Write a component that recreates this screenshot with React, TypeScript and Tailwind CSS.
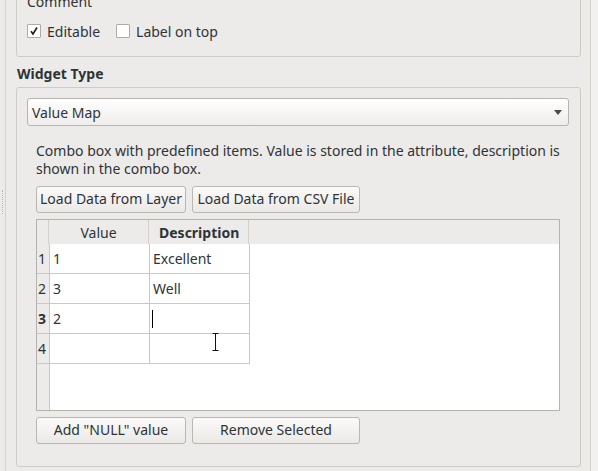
import React from "react";

const font = { fontFamily: '"Noto Sans", "Open Sans", sans-serif' };

function Checkbox({ checked, label }: { checked?: boolean; label: string }) {
  return (
    <label className="flex items-center gap-[6px]">
      <span className="w-[14px] h-[14px] border border-[#aeaaa6] bg-white rounded-[1px] flex items-center justify-center">
        {checked && (
          <svg width="10" height="10" viewBox="0 0 10 10">
            <path d="M2 5.2 L4 8 L8 1.5" fill="none" stroke="#1e1e1e" strokeWidth="1.6" />
          </svg>
        )}
      </span>
      <span>{label}</span>
    </label>
  );
}

function Button({ children, w }: { children: React.ReactNode; w: string }) {
  return (
    <button
      className={`${w} h-[27px] border border-[#bab6b2] rounded-[3px] bg-gradient-to-b from-[#fbfaf9] to-[#ebe9e6] text-[#2e3436] flex items-center justify-center leading-[18px] pb-[1px]`}
    >
      {children}
    </button>
  );
}

const rows = [
  { n: "1", value: "1", desc: "Excellent" },
  { n: "2", value: "3", desc: "Well" },
  { n: "3", value: "2", desc: "", current: true },
  { n: "4", value: "", desc: "" },
];

function ValueTable() {
  return (
    <div className="h-[192px] border border-[#b5b2ae] bg-white flex flex-col overflow-hidden">
      <div className="flex h-[24px] bg-[#edebe9] shrink-0">
        <div className="w-[12px] border-r border-[#d3d0cc]" />
        <div className="w-[100px] border-r border-[#d3d0cc] flex items-center justify-center">Value</div>
        <div className="w-[100px] border-r border-[#d3d0cc] flex items-center pl-[10px] font-bold">Description</div>
      </div>
      <div className="flex flex-1">
        <div className="w-[13px] bg-[#edebe9] border-r border-[#c8c8c8] flex flex-col">
          {rows.map((r) => (
            <div
              key={r.n}
              className={`h-[30px] border-b border-[#c8c8c8] flex items-center pl-[1px] ${r.current ? "font-bold" : ""}`}
            >
              {r.n}
            </div>
          ))}
        </div>
        <div className="flex flex-col">
          {rows.map((r) => (
            <div key={r.n} className="flex h-[30px]">
              <div className="w-[100px] border-r border-b border-[#c8c8c8] flex items-center pl-[3px]">{r.value}</div>
              <div className="w-[100px] border-r border-b border-[#c8c8c8] flex items-center pl-[3px] relative">
                {r.desc}
                {r.current && <span className="absolute left-[2px] top-[6px] w-[1px] h-[18px] bg-black" />}
              </div>
            </div>
          ))}
        </div>
      </div>
    </div>
  );
}

export default function App() {
  return (
    <div
      className="w-[598px] h-[471px] bg-[#edebe9] text-[#2e3436] text-[14px] overflow-hidden flex relative"
      style={font}
    >
      {/* splitter handle */}
      <div className="w-[5px] flex flex-col items-center pt-[190px]">
        <div className="w-[1px] h-[24px] border-l border-dotted border-[#b8b4b0]" />
      </div>

      {/* scroll area */}
      <div className="w-[586px] border-l border-r border-[#d6d3cf] pl-[10px] pr-[9px] flex flex-col">
        {/* top group box */}
        <div className="mt-[-40px] h-[97px] border border-[#cfccc8] rounded-[3px] pt-[32px] pl-[10px]">
          <div className="h-[18px] leading-[18px]">Comment</div>
          <div className="mt-[11px] h-[18px] flex items-center gap-[16px]">
            <Checkbox checked label="Editable" />
            <Checkbox label="Label on top" />
          </div>
        </div>

        <div className="mt-[8px] h-[18px] leading-[18px] font-bold pl-[1px]">Widget Type</div>

        {/* widget group box */}
        <div className="mt-[4px] h-[380px] border border-[#cfccc8] rounded-[3px] pt-[10px] pl-[10px] pr-[11px]">
          <div className="h-[28px] border border-[#b8b4b0] rounded-[3px] bg-gradient-to-b from-white to-[#efedeb] flex items-center justify-between pl-[4px] pr-[6px]">
            <span>Value Map</span>
            <svg width="8" height="5" viewBox="0 0 8 5">
              <path d="M0 0 H8 L4 5 Z" fill="#4a4a4a" />
            </svg>
          </div>

          <div className="px-[9px]">
            <p className="mt-[16px] leading-[18px]">
              Combo box with predefined items. Value is stored in the attribute, description is shown in the combo box.
            </p>
            <div className="mt-[8px] flex gap-[6px]">
              <Button w="w-[150px]">Load Data from Layer</Button>
              <Button w="w-[168px]">Load Data from CSV File</Button>
            </div>
            <div className="mt-[6px] relative">
              <ValueTable />
              {/* mouse I-beam */}
              <svg className="absolute left-[176px] top-[114px]" width="7" height="18" viewBox="0 0 7 18">
                <path d="M0.5 0.5 H6.5 M3.5 0.5 V17.5 M0.5 17.5 H6.5" stroke="#fff" strokeWidth="2.5" fill="none" />
                <path d="M0.5 0.5 H6.5 M3.5 0.5 V17.5 M0.5 17.5 H6.5" stroke="#111" strokeWidth="1" fill="none" />
              </svg>
            </div>
            <div className="mt-[6px] flex gap-[6px]">
              <Button w="w-[150px]">Add "NULL" value</Button>
              <Button w="w-[168px]">Remove Selected</Button>
            </div>
          </div>
        </div>
      </div>

      {/* right strip */}
      <div className="flex-1 bg-[#f2f1ef]" />
    </div>
  );
}
